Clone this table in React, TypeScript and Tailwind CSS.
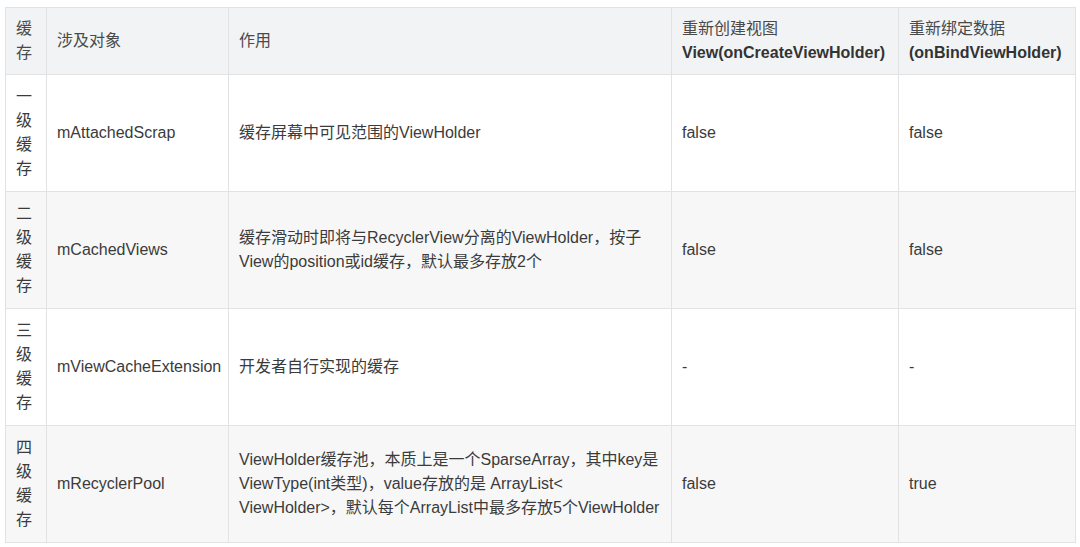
import React from 'react';

interface Row {
  level: string;
  name: string;
  desc: string;
  create: string;
  bind: string;
}

const rows: Row[] = [
  { level: '一级缓存', name: 'mAttachedScrap', desc: '缓存屏幕中可见范围的ViewHolder', create: 'false', bind: 'false' },
  {
    level: '二级缓存',
    name: 'mCachedViews',
    desc: '缓存滑动时即将与RecyclerView分离的ViewHolder，按子View的position或id缓存，默认最多存放2个',
    create: 'false',
    bind: 'false',
  },
  { level: '三级缓存', name: 'mViewCacheExtension', desc: '开发者自行实现的缓存', create: '-', bind: '-' },
  {
    level: '四级缓存',
    name: 'mRecyclerPool',
    desc: 'ViewHolder缓存池，本质上是一个SparseArray，其中key是ViewType(int类型)，value存放的是 ArrayList< ViewHolder>，默认每个ArrayList中最多存放5个ViewHolder',
    create: 'false',
    bind: 'true',
  },
];

const cell = 'border border-[#e2e2e2] px-[10px] py-[10px] align-middle text-left';
const head = 'border border-[#e2e2e2] px-[10px] py-[9px] align-middle text-left';

export default function App() {
  return (
    <div className="min-h-[547px] w-[1080px] bg-white pl-[5px] pt-[7px] font-['Liberation_Sans','Noto_Sans_CJK_SC',sans-serif] text-[16px] leading-[24px] text-[#3b3b3b]">
      <table className="w-[1070px] table-fixed border-collapse">
        <colgroup>
          <col className="w-[41px]" />
          <col className="w-[182px]" />
          <col className="w-[443px]" />
          <col className="w-[227px]" />
          <col className="w-[177px]" />
        </colgroup>
        <thead>
          <tr className="bg-[#f1f3f5]">
            <th className={head + ' font-normal text-[#4a4a4a]'}>缓存</th>
            <th className={head + ' font-normal text-[#4a4a4a]'}>涉及对象</th>
            <th className={head + ' font-normal text-[#4a4a4a]'}>作用</th>
            <th className={head}>
              <div className="h-[24px] font-normal text-[#4a4a4a]">重新创建视图</div>
              <div className="h-[24px] font-bold text-[#333]">View(onCreateViewHolder)</div>
            </th>
            <th className={head}>
              <div className="h-[24px] font-normal text-[#4a4a4a]">重新绑定数据</div>
              <div className="h-[24px] font-bold text-[#333]">(onBindViewHolder)</div>
            </th>
          </tr>
        </thead>
        <tbody>
          {rows.map((r, i) => (
            <tr key={r.name} className={i % 2 === 1 ? 'bg-[#f7f7f7]' : 'bg-white'}>
              <td className={cell + ' break-all'}>{r.level}</td>
              <td className={cell}>{r.name}</td>
              <td className={cell}>{r.desc}</td>
              <td className={cell}>{r.create}</td>
              <td className={cell}>{r.bind}</td>
            </tr>
          ))}
        </tbody>
      </table>
    </div>
  );
}
